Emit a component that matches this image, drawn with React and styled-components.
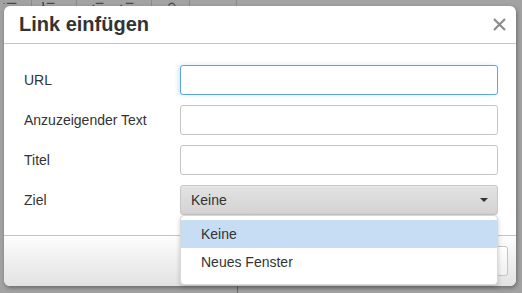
import styled, { createGlobalStyle } from 'styled-components'
import { List, ListOrdered, Outdent, Indent, Link } from 'lucide-react'

const GlobalStyle = createGlobalStyle`
  html, body {
    margin: 0;
    padding: 0;
    background: #a2a2a2;
    font-family: "Liberation Sans", Arial, sans-serif;
  }
`

const Page = styled.div`
  position: relative;
  width: 522px;
  height: 293px;
  overflow: hidden;
  background: #a2a2a2;
`
const Toolbar = styled.div`
  display: flex;
  align-items: flex-end;
  height: 6px;
  overflow: hidden;
  color: #4a4a4a;
`
const ToolGroup = styled.div`
  display: flex;
  align-items: flex-end;
  gap: 14px;
  width: ${({ $w }) => $w}px;
  height: 6px;
  padding-left: ${({ $pad }) => $pad || 0}px;
  border-right: 1px solid #8a8a8a;
  box-sizing: border-box;

  svg {
    margin-bottom: -10px;
  }
`
const EditorLine = styled.div`
  position: absolute;
  left: 237px;
  bottom: 0;
  width: 1px;
  height: 8px;
  background: #6e6e6e;
`
const Dialog = styled.div`
  position: absolute;
  left: 4px;
  top: 6px;
  width: 512px;
  height: 280px;
  display: flex;
  flex-direction: column;
  background: #fff;
  border-radius: 6px;
  box-shadow: 1px 2px 4px rgba(0, 0, 0, 0.35);
`
const Header = styled.div`
  display: flex;
  align-items: center;
  justify-content: space-between;
  height: 37px;
  padding: 0 9px 0 15px;
  border-bottom: 1px solid #c5c5c5;
`
const Title = styled.h1`
  margin: 0;
  font-size: 20px;
  font-weight: 700;
  color: #333;
`
const Close = styled.span`
  display: flex;
  color: #8c8c8c;
`
const Body = styled.div`
  flex: 1;
  display: flex;
  flex-direction: column;
  gap: 10px;
  padding: 21px 18px 0 20px;
`
const Row = styled.div`
  display: grid;
  grid-template-columns: 156px 1fr;
  align-items: center;
  height: 30px;
`
const Label = styled.label`
  font-size: 14px;
  color: #333;
`
const Input = styled.div`
  height: 30px;
  box-sizing: border-box;
  border: 1px solid ${({ $focus }) => ($focus ? '#5ca5e6' : '#c5c5c5')};
  border-radius: 3px;
  background: #fff;
  box-shadow: ${({ $focus }) => ($focus ? '-2px 0 4px rgba(82, 168, 236, 0.25)' : 'none')};
`
const SelectWrap = styled.div`
  position: relative;
`
const Select = styled.div`
  display: flex;
  align-items: center;
  justify-content: space-between;
  height: 30px;
  box-sizing: border-box;
  padding: 0 9px 0 10px;
  border: 1px solid #c5c5c5;
  border-radius: 3px;
  background: linear-gradient(#e3e3e3, #d3d3d3);
  box-shadow: inset 0 1px 0 rgba(255, 255, 255, 0.3);
  font-size: 14px;
  color: #333;
`
const Caret = styled.span`
  width: 0;
  height: 0;
  border-left: 4px solid transparent;
  border-right: 4px solid transparent;
  border-top: 4px solid #333;
`
const Menu = styled.ul`
  position: absolute;
  z-index: 2;
  left: 0;
  right: 0;
  top: 30px;
  margin: 0;
  padding: 4px 0 8px;
  list-style: none;
  background: #fff;
  border: 1px solid #d8d8d8;
  border-radius: 4px;
  box-shadow: 0 2px 5px rgba(0, 0, 0, 0.2);
`
const MenuItem = styled.li`
  height: 28px;
  display: flex;
  align-items: center;
  padding-left: 20px;
  font-size: 14px;
  color: #333;
  background: ${({ $active }) => ($active ? '#c6ddf3' : 'transparent')};
`
const Footer = styled.div`
  display: flex;
  justify-content: flex-end;
  align-items: center;
  gap: 8px;
  height: 50px;
  padding: 0 8px;
  border-top: 1px solid #c5c5c5;
  border-radius: 0 0 6px 6px;
  background: linear-gradient(#fdfdfd, #e2e2e2);
`
const Button = styled.button`
  height: 30px;
  padding: 0 14px;
  border: 1px solid #c5c5c5;
  border-radius: 3px;
  background: linear-gradient(#fff, #f0f0f0);
  font-family: inherit;
  font-size: 14px;
  color: #333;
`

const fields = ['URL', 'Anzuzeigender Text', 'Titel']

export default function App() {
  return (
    <Page>
      <GlobalStyle />
      <Toolbar>
        <ToolGroup $w={32} $pad={2}><List size={16} /></ToolGroup>
        <ToolGroup $w={45} $pad={8}><ListOrdered size={16} /></ToolGroup>
        <ToolGroup $w={75} $pad={12}><Outdent size={16} /><Indent size={16} /></ToolGroup>
        <ToolGroup $w={38} $pad={10}><Link size={14} /></ToolGroup>
        <ToolGroup $w={47} />
      </Toolbar>
      <EditorLine />
      <Dialog>
        <Header>
          <Title>Link einfügen</Title>
          <Close>
            <svg width="15" height="15" viewBox="0 0 15 15">
              <path d="M2 2 L13 13 M13 2 L2 13" stroke="currentColor" strokeWidth="2.2" />
            </svg>
          </Close>
        </Header>
        <Body>
          {fields.map((f, i) => (
            <Row key={f}>
              <Label>{f}</Label>
              <Input $focus={i === 0} />
            </Row>
          ))}
          <Row>
            <Label>Ziel</Label>
            <SelectWrap>
              <Select>
                <span>Keine</span>
                <Caret />
              </Select>
              <Menu>
                <MenuItem $active>Keine</MenuItem>
                <MenuItem>Neues Fenster</MenuItem>
              </Menu>
            </SelectWrap>
          </Row>
        </Body>
        <Footer>
          <Button>Ok</Button>
          <Button>Abbrechen</Button>
        </Footer>
      </Dialog>
    </Page>
  )
}
